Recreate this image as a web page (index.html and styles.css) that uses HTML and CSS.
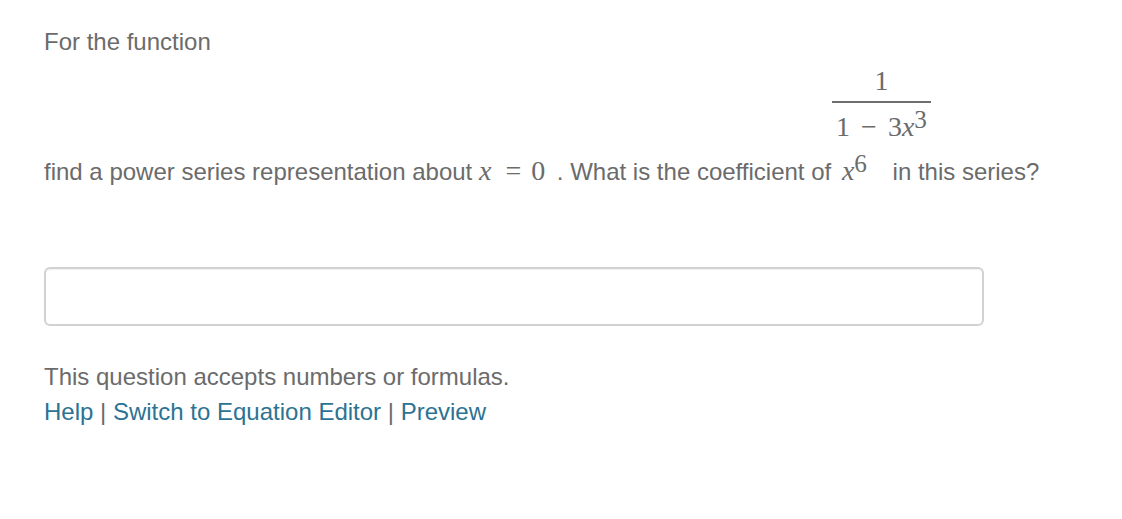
FILE: index.html
```html
<!DOCTYPE html>
<html lang="en">
<head>
<meta charset="utf-8">
<title>Question</title>
<link rel="stylesheet" href="styles.css">
</head>
<body>
<div class="question">
  <p class="text intro">For the function</p>
  <div class="display">
    <span class="frac">
      <span class="num">1</span>
      <span class="den"><span class="mn">1</span><span class="mo minus">−</span><span class="mn">3</span><span class="mi">x</span><span class="sup">3</span></span>
    </span>
  </div>
  <p class="text ask">find a power series representation about <span class="math"><span class="mi">x</span><span class="mo eq">=</span><span class="mn">0</span></span> . What is the coefficient of <span class="math pow"><span class="mi">x</span><span class="sup">6</span></span> in this series?</p>
  <div class="answer"><input class="answer-input" type="text" aria-label="Answer"></div>
  <p class="text note">This question accepts numbers or formulas.</p>
  <p class="text links"><a class="link" href="#">Help</a> | <a class="link" href="#">Switch to Equation Editor</a> | <a class="link" href="#">Preview</a></p>
</div>
</body>
</html>
```

FILE: styles.css
```css
html, body {
  margin: 0;
  padding: 0;
  background: #ffffff;
}

body {
  font-family: "Liberation Sans", Arial, Helvetica, sans-serif;
  font-size: 24px;
  color: #6b6b6b;
}

.question {
  padding: 25px 0 0 44px;
}

.text {
  margin: 0;
  line-height: 34px;
}

.display {
  margin-top: 8px;
  padding-left: 788px;
  font-family: "Liberation Serif", "Times New Roman", serif;
  font-size: 28px;
  line-height: 28px;
}

.frac {
  display: inline-flex;
  flex-direction: column;
  align-items: stretch;
  text-align: center;
  width: 99px;
}

.num {
  display: block;
  padding-bottom: 6px;
}

.den {
  display: block;
  border-top: 2px solid #6e6e6e;
  padding-top: 10px;
  white-space: nowrap;
}

.mi {
  font-style: italic;
}

.minus {
  margin: 0 11px;
}

.sup {
  font-size: 0.9em;
  line-height: 0;
  position: relative;
  top: -0.32em;
}

.ask {
  margin-top: 14px;
}

.math {
  font-family: "Liberation Serif", "Times New Roman", serif;
  font-size: 28px;
  line-height: 0;
}

.eq {
  margin: 0 10px 0 14px;
}

.ask .math:first-of-type {
  margin-right: 5px;
}

.pow {
  margin-left: 4px;
  margin-right: 19px;
}

.answer {
  margin-top: 78px;
  width: 940px;
}

.answer-input {
  display: block;
  box-sizing: border-box;
  width: 100%;
  height: 59px;
  margin: 0;
  padding: 0 12px;
  border: 2px solid #d2d2d2;
  border-radius: 6px;
  background: #ffffff;
  box-shadow: inset 0 1px 1px rgba(0, 0, 0, 0.06);
  font-family: inherit;
  font-size: 20px;
  outline: none;
}

.note {
  margin-top: 33px;
  line-height: 35px;
}

.links {
  line-height: 35px;
}

.link {
  color: #2c7393;
  text-decoration: none;
}
```
